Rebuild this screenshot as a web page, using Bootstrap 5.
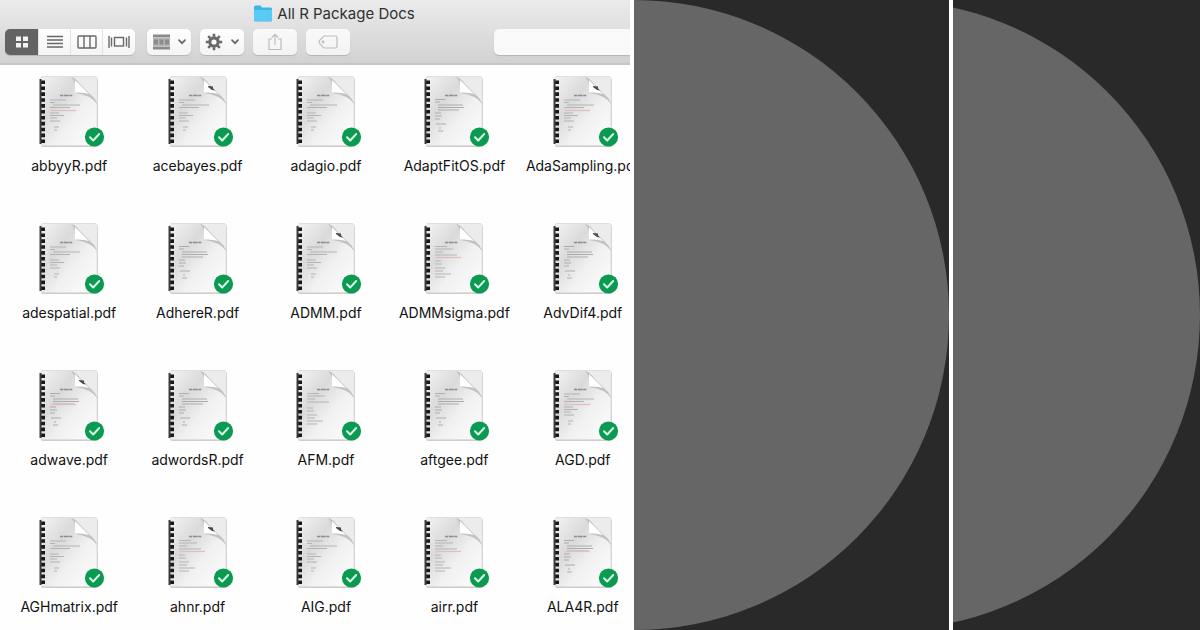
<!DOCTYPE html>
<html lang="en">
<head>
<meta charset="utf-8">
<meta name="viewport" content="width=device-width, initial-scale=1">
<title>All R Package Docs</title>
<link href="https://cdn.jsdelivr.net/npm/bootstrap@5.3.0/dist/css/bootstrap.min.css" rel="stylesheet">
<style>
  body { font-family: Inter, "Liberation Sans", sans-serif; background: #fff; }
  .stage { height: 100vh; gap: 4px; }
  .finder { flex: 630 1 0; min-width: 0; background: #fefefe; }
  .disc-wide { flex: 315 1 0; min-width: 0; background: #292929; }
  .disc-slim { flex: 247 1 0; min-width: 0; background: #292929; }
  .titlebar { background: linear-gradient(#ebebeb, #d2d2d2); border-bottom: 2px solid #c6c6c6; }
  .window-title { font-size: 15px; line-height: 27px; height: 27px; font-weight: 400; padding-left: 38px; gap: 4px; color: #303030; }
  .toolbar-row { padding: 2px 0 8px 5px; gap: 9px; }
  .tool { height: 26px; width: 44px; padding: 0; border: 0; border-radius: 5px; background: linear-gradient(#fff, #f4f4f4); color: #686868; box-shadow: 0 1px 1px #b4b4b4; }
  .tool:disabled { color: #bdbdbd; opacity: 1; background: linear-gradient(#f9f9f9, #f3f3f3); border: 0; }
  .views { box-shadow: 0 1px 1px #b4b4b4; border-radius: 5px; margin-right: 3px; }
  .views .tool { width: 32px; box-shadow: none; border-right: 1px solid #e2e2e2; }
  .views .tool.active { width: 34px; background: #636363; color: #f2f2f2; }
  .search-box { width: 136px; height: 26px; border: 0; border-radius: 5px 0 0 5px; background: #f9f9f9; box-shadow: 0 1px 1px #b4b4b4; }
  .files { display: grid; grid-template-columns: repeat(5, 1fr); grid-auto-rows: 147px; margin: 10px -17px 0 5px; padding: 0; list-style: none; }
  .file-link { color: #111; font-size: 14px; line-height: 20px; text-decoration: none; white-space: nowrap; gap: 8px; }
  .file-link svg { margin-left: 4px; }
</style>
</head>
<body>
<svg width="0" height="0" class="position-absolute" aria-hidden="true">
  <defs>
    <linearGradient id="paper" x1="0" y1="0" x2="1" y2="1"><stop offset="0" stop-color="#f3f3f3"/><stop offset=".34" stop-color="#dadada"/><stop offset=".6" stop-color="#f1f1f1"/><stop offset="1" stop-color="#fdfdfd"/></linearGradient>
    <symbol id="doc" viewBox="0 0 68 73">
      <rect x="4" y="3" width="57" height="69" rx="2" fill="#cdcdcd"/>
      <rect x="4" y="1.500" width="56" height="69" rx="2" fill="url(#paper)" stroke="#dedede" stroke-width="1"/>
      <path d="M34 2H58Q60 2 60 4V28Q59 25 54 21L39 5Q37 3 34 2Z" fill="#ececec"/>
      <path d="M34 2Q39 3 43 9L54 20Q59 24 60 29Q54 20 38.500 18Q40 8 34 2Z" fill="#c2c2c2"/>
      <path d="M38 5L52 19Q47 17 38 17.500Z" fill="#fff"/>
      <path d="M6 5.500V69" stroke="#181818" stroke-width="4" stroke-dasharray="3.600 2.300"/>
      <path d="M3.500 4V69" stroke="#3c3c3c" stroke-width="2"/>
      <path d="M23 20.500h13" stroke="#8c8c8c" stroke-width="1.400" stroke-dasharray="3 .7 5 .6"/>
      <circle cx="57.500" cy="62" r="9.600" fill="#0b9a51"/>
      <path d="M53 62.200l3.200 3.300 6-6.500" fill="none" stroke="#d9f7e5" stroke-width="2" stroke-linecap="round" stroke-linejoin="round"/>
    </symbol>
    <symbol id="text-a" viewBox="0 0 68 73"><path d="M13 25h16M13 27.500h5M16 30h27M13 32.500h20M13 38h9M13 40.500h14M13 43h7M13 46h10M17 52h5M17 55h3" stroke="#b3b3b3" stroke-width="1.100"/></symbol>
    <symbol id="text-b" viewBox="0 0 68 73"><path d="M13 24.500h10M13 27h5M16 30h25M16 32.500h26M16 35h21M13 38h6M13 41h7M13 44h5M14 49h10M17 53h2M16 56h5" stroke="#adadad" stroke-width="1.200"/></symbol>
    <symbol id="text-c" viewBox="0 0 68 73"><path d="M13 24.500h12M13 27h18M13 30h8M13 33h22M13 39h6M13 42h7M13 46h10M13 49h8M13 52h16M13 55h10" stroke="#b6b6b6" stroke-width="1.100"/></symbol>
    <symbol id="red-line" viewBox="0 0 68 73"><path d="M14 35.500h25" stroke="#e6bcbc" stroke-width="1.200"/></symbol>
    <symbol id="mark-fold" viewBox="0 0 68 73"><path d="M42 11l5 .5v2l2 2-3-.5-4-3z" fill="#4c4c4c"/></symbol>
    <symbol id="chev" viewBox="0 0 8 6"><path d="M1 1.200l3 3 3-3" fill="none" stroke="currentColor" stroke-width="1.700" stroke-linecap="round"/></symbol>
  </defs>
</svg>

<main class="stage d-flex overflow-hidden">
  <section class="finder overflow-hidden" aria-label="Finder window">
    <header class="titlebar">
      <h1 class="window-title d-flex justify-content-center align-items-center mb-0">
        <svg width="20" height="17" viewBox="0 0 20 17" aria-hidden="true"><path d="M1 2q0-1.500 1.500-1.500h5L9 2.500h8.500Q19 2.500 19 4v11q0 1.500-1.500 1.500h-15Q1 16.500 1 15z" fill="#3fb5e6"/><path d="M1 5h18v10q0 1-1.500 1h-15Q1 16 1 15z" fill="#5acbf5"/></svg>
        <span>All R Package Docs</span>
      </h1>
      <div class="toolbar-row d-flex align-items-center">
        <div class="views d-flex" role="group" aria-label="View">
          <button type="button" class="tool active rounded-end-0 d-flex align-items-center justify-content-center" aria-label="Icons"><svg width="14" height="14" viewBox="0 0 14 14" fill="currentColor"><path d="M1 1.500h5v4.500H1zM8 1.500h5v4.500H8zM1 8h5v4.500H1zM8 8h5v4.500H8z"/></svg></button>
          <button type="button" class="tool rounded-0 d-flex align-items-center justify-content-center" aria-label="List"><svg width="18" height="14" viewBox="0 0 18 14" stroke="currentColor" stroke-width="1.300"><path d="M1 1.500h16M1 5h16M1 8.500h16M1 12h16"/></svg></button>
          <button type="button" class="tool rounded-0 d-flex align-items-center justify-content-center" aria-label="Columns"><svg width="20" height="14" viewBox="0 0 20 14" fill="none" stroke="currentColor" stroke-width="1.400"><rect x="1" y="1" width="18" height="12" rx="1"/><path d="M7 1v12M13 1v12"/></svg></button>
          <button type="button" class="tool rounded-start-0 border-end-0 d-flex align-items-center justify-content-center" aria-label="Gallery"><svg width="22" height="14" viewBox="0 0 22 14" fill="none" stroke="currentColor" stroke-width="1.400"><path d="M1 1v12M3.500 2.500v9M18.500 2.500v9M21 1v12"/><rect x="6.500" y="2.500" width="9" height="8.500"/></svg></button>
        </div>
        <button type="button" class="tool d-flex align-items-center justify-content-center gap-2" aria-label="Arrange"><svg width="17" height="16" viewBox="0 0 17 16"><path d="M0 .5h17v3H0zM0 12.500h17v3H0z" fill="#8a8a8a"/><path d="M0 4h17v8H0z" fill="#b5b5b5"/><path d="M1 5.500h4v5H1zM6.500 5.500h4v5h-4zM12 5.500h4v5h-4z" fill="#8c8c8c"/></svg><svg width="8" height="6"><use href="#chev"/></svg></button>
        <button type="button" class="tool d-flex align-items-center justify-content-center gap-2" aria-label="Actions"><svg width="18" height="18" viewBox="0 0 18 18" fill="none" stroke="currentColor"><circle cx="9" cy="9" r="4.200" stroke-width="3.200"/><path d="M9 .8v3M9 14.200v3M.8 9h3M14.200 9h3M3.200 3.200l2 2M12.800 12.800l2 2M3.200 14.800l2-2M12.800 5.200l2-2" stroke-width="2.600"/></svg><svg width="8" height="6"><use href="#chev"/></svg></button>
        <button type="button" class="tool d-flex align-items-center justify-content-center" disabled aria-label="Share"><svg width="16" height="18" viewBox="0 0 16 18" fill="none" stroke="currentColor" stroke-width="1.200"><path d="M5 6H2v10.500h12V6h-3M8 12V1.500M4.800 4.500L8 1.300l3.200 3.200"/></svg></button>
        <button type="button" class="tool d-flex align-items-center justify-content-center" disabled aria-label="Edit tags"><svg width="20" height="14" viewBox="0 0 20 14" fill="none" stroke="currentColor" stroke-width="1.200"><path d="M6 1h11.500Q19 1 19 2.500v9q0 1.500-1.500 1.500H6L1.500 8.500Q.7 7 1.500 5.500z"/><circle cx="5" cy="7" r=".8"/></svg></button>
        <input type="search" class="search-box ms-auto" aria-label="Search">
      </div>
    </header>

    <ul class="files">
      <li><a href="#" class="file-link d-flex flex-column align-items-center"><svg width="68" height="73"><use href="#doc"/><use href="#text-a"/><use href="#red-line"/></svg><span>abbyyR.pdf</span></a></li>
      <li><a href="#" class="file-link d-flex flex-column align-items-center"><svg width="68" height="73"><use href="#doc"/><use href="#text-a"/><use href="#mark-fold"/></svg><span>acebayes.pdf</span></a></li>
      <li><a href="#" class="file-link d-flex flex-column align-items-center"><svg width="68" height="73"><use href="#doc"/><use href="#text-a"/></svg><span>adagio.pdf</span></a></li>
      <li><a href="#" class="file-link d-flex flex-column align-items-center"><svg width="68" height="73"><use href="#doc"/><use href="#text-b"/></svg><span>AdaptFitOS.pdf</span></a></li>
      <li><a href="#" class="file-link d-flex flex-column align-items-center"><svg width="68" height="73"><use href="#doc"/><use href="#text-a"/><use href="#red-line"/><use href="#mark-fold"/></svg><span>AdaSampling.pdf</span></a></li>

      <li><a href="#" class="file-link d-flex flex-column align-items-center"><svg width="68" height="73"><use href="#doc"/><use href="#text-a"/></svg><span>adespatial.pdf</span></a></li>
      <li><a href="#" class="file-link d-flex flex-column align-items-center"><svg width="68" height="73"><use href="#doc"/><use href="#text-b"/></svg><span>AdhereR.pdf</span></a></li>
      <li><a href="#" class="file-link d-flex flex-column align-items-center"><svg width="68" height="73"><use href="#doc"/><use href="#text-a"/><use href="#mark-fold"/></svg><span>ADMM.pdf</span></a></li>
      <li><a href="#" class="file-link d-flex flex-column align-items-center"><svg width="68" height="73"><use href="#doc"/><use href="#text-c"/><use href="#red-line"/></svg><span>ADMMsigma.pdf</span></a></li>
      <li><a href="#" class="file-link d-flex flex-column align-items-center"><svg width="68" height="73"><use href="#doc"/><use href="#text-b"/><use href="#mark-fold"/></svg><span>AdvDif4.pdf</span></a></li>

      <li><a href="#" class="file-link d-flex flex-column align-items-center"><svg width="68" height="73"><use href="#doc"/><use href="#text-b"/><use href="#red-line"/><use href="#mark-fold"/></svg><span>adwave.pdf</span></a></li>
      <li><a href="#" class="file-link d-flex flex-column align-items-center"><svg width="68" height="73"><use href="#doc"/><use href="#text-b"/></svg><span>adwordsR.pdf</span></a></li>
      <li><a href="#" class="file-link d-flex flex-column align-items-center"><svg width="68" height="73"><use href="#doc"/><use href="#text-c"/></svg><span>AFM.pdf</span></a></li>
      <li><a href="#" class="file-link d-flex flex-column align-items-center"><svg width="68" height="73"><use href="#doc"/><use href="#text-b"/></svg><span>aftgee.pdf</span></a></li>
      <li><a href="#" class="file-link d-flex flex-column align-items-center"><svg width="68" height="73"><use href="#doc"/><use href="#text-a"/><use href="#red-line"/></svg><span>AGD.pdf</span></a></li>

      <li><a href="#" class="file-link d-flex flex-column align-items-center"><svg width="68" height="73"><use href="#doc"/><use href="#text-a"/></svg><span>AGHmatrix.pdf</span></a></li>
      <li><a href="#" class="file-link d-flex flex-column align-items-center"><svg width="68" height="73"><use href="#doc"/><use href="#text-c"/><use href="#red-line"/><use href="#mark-fold"/></svg><span>ahnr.pdf</span></a></li>
      <li><a href="#" class="file-link d-flex flex-column align-items-center"><svg width="68" height="73"><use href="#doc"/><use href="#text-a"/><use href="#mark-fold"/></svg><span>AIG.pdf</span></a></li>
      <li><a href="#" class="file-link d-flex flex-column align-items-center"><svg width="68" height="73"><use href="#doc"/><use href="#text-c"/><use href="#red-line"/></svg><span>airr.pdf</span></a></li>
      <li><a href="#" class="file-link d-flex flex-column align-items-center"><svg width="68" height="73"><use href="#doc"/><use href="#text-b"/><use href="#red-line"/></svg><span>ALA4R.pdf</span></a></li>
    </ul>
  </section>

  <div class="disc-wide"><svg class="d-block w-100 h-100" viewBox="0 0 315 630" preserveAspectRatio="xMaxYMid slice" aria-hidden="true"><circle cx="0" cy="315" r="315" fill="#666"/></svg></div>
  <div class="disc-slim"><svg class="d-block w-100 h-100" viewBox="68 0 247 630" preserveAspectRatio="xMaxYMid slice" aria-hidden="true"><circle cx="0" cy="315" r="315" fill="#666"/></svg></div>
</main>
<script src="https://cdn.jsdelivr.net/npm/bootstrap@5.3.0/dist/js/bootstrap.bundle.min.js"></script>
</body>
</html>
